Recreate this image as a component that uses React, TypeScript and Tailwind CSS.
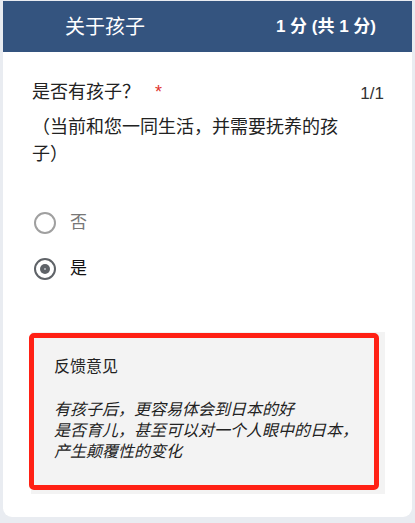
import React from 'react'

const font = { fontFamily: '"Liberation Sans", "Noto Sans CJK SC", sans-serif' }

function Radio({ checked }: { checked?: boolean }) {
  // 单选圆圈，选中时为深灰实心圆点
  if (checked) {
    return (
      <span className="flex h-[22px] w-[22px] items-center justify-center rounded-full border-[2.5px] border-[#5f6368]">
        <span className="flex h-[10px] w-[10px] items-center justify-center rounded-full bg-[#5f6368]">
          <span className="h-[2px] w-[2px] rounded-full bg-[#bfc3c8]" />
        </span>
      </span>
    )
  }
  return <span className="block h-[22px] w-[22px] rounded-full border-2 border-[#a0a0a0]" />
}

export default function App() {
  return (
    <div className="min-h-[523px] bg-[#e9ecf1] px-[3px] pt-px" style={font}>
      <div className="w-[409px] overflow-hidden rounded-b-[9px] bg-white pb-[23px]">
        {/* 标题栏 */}
        <div className="flex h-[51px] items-center justify-between bg-[#34547f] pl-[62px] pr-[36px] text-white">
          <span className="text-[20px]">关于孩子</span>
          <span className="text-[17px] font-bold">1 分 (共 1 分)</span>
        </div>

        {/* 题目 */}
        <div className="flex justify-between pl-[29px] pr-[28px] pt-[27px]">
          <div className="w-[330px]">
            <p className="text-[18px] leading-[27px] text-[#222]">
              是否有孩子？<span className="ml-[15px] text-[#e0342f]">*</span>
            </p>
            <p className="mt-[8px] text-[18px] leading-[27px] text-[#222]">
              （当前和您一同生活，并需要抚养的孩子）
            </p>
          </div>
          <span className="pt-[4px] text-[17px] leading-[22px] text-[#333]">1/1</span>
        </div>

        {/* 选项 */}
        <div className="mt-[44px] flex flex-col gap-[24px] pl-[31px]">
          <label className="flex h-[22px] items-center gap-[14px]">
            <Radio />
            <span className="text-[17px] text-[#777]">否</span>
          </label>
          <label className="flex h-[22px] items-center gap-[14px]">
            <Radio checked />
            <span className="text-[17px] text-[#111]">是</span>
          </label>
        </div>

        {/* 反馈意见 */}
        <div className="relative ml-[28px] mt-[52px] w-[354px] bg-[#f3f3f3] pb-[32px] pl-[23px] pr-[8px] pt-[24px]">
          <div className="absolute left-[-2px] top-[1px] h-[157px] w-[350px] rounded-[5px] border-[5px] border-[#ff2014]" />
          <p className="text-[16px] leading-[22px] text-[#222]">反馈意见</p>
          <p className="mt-[21px] text-[16px] italic leading-[21px] text-[#222]">
            有孩子后，更容易体会到日本的好
            <br />
            是否育儿，甚至可以对一个人眼中的日本，
            <br />
            产生颠覆性的变化
          </p>
        </div>
      </div>
    </div>
  )
}
